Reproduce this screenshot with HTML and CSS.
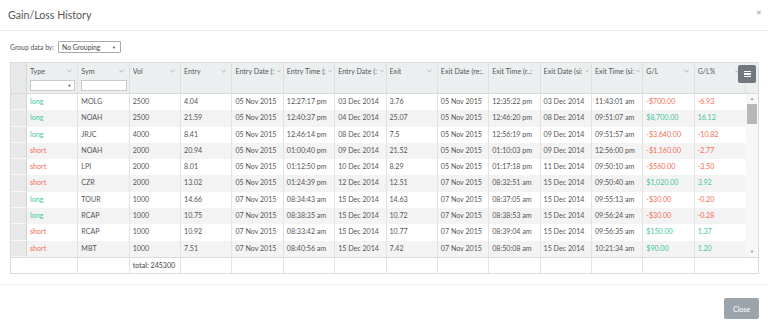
FILE: index.html
```html
<!DOCTYPE html>
<html>
<head>
<meta charset="utf-8">
<link rel="stylesheet" href="styles.css">
</head>
<body>
<div class="modal">
  <div class="modal-header">
    <span class="modal-title">Gain/Loss History</span>
    <span class="close-x">&#x2715;</span>
  </div>
  <div class="modal-body">
    <div class="group-row">
      <span class="group-label">Group data by:</span>
      <span class="group-select">No Grouping<span class="caret">&#9660;</span></span>
    </div>
    <div class="grid">
      <div class="hrow">
        <div class="hcell rh"></div>
        <div class="hcell"><div class="hl"><span class="lbl">Type</span><svg class="chev" viewBox="0 0 6 4"><path d="M0.5 0.8 L3 3.2 L5.5 0.8" /></svg></div><div class="fsel"><span class="caret">&#9660;</span></div></div>
        <div class="hcell"><div class="hl"><span class="lbl">Sym</span><svg class="chev" viewBox="0 0 6 4"><path d="M0.5 0.8 L3 3.2 L5.5 0.8" /></svg></div><div class="finp"></div></div>
        <div class="hcell"><div class="hl"><span class="lbl">Vol</span><svg class="chev" viewBox="0 0 6 4"><path d="M0.5 0.8 L3 3.2 L5.5 0.8" /></svg></div></div>
        <div class="hcell"><div class="hl"><span class="lbl">Entry</span><svg class="chev" viewBox="0 0 6 4"><path d="M0.5 0.8 L3 3.2 L5.5 0.8" /></svg></div></div>
        <div class="hcell"><div class="hl"><span class="lbl trunc">Entry Date (:</span><svg class="chev tiny" viewBox="0 0 6 4"><path d="M0.5 0.8 L3 3.2 L5.5 0.8" /></svg></div></div>
        <div class="hcell"><div class="hl"><span class="lbl trunc">Entry Time (:</span><svg class="chev tiny" viewBox="0 0 6 4"><path d="M0.5 0.8 L3 3.2 L5.5 0.8" /></svg></div></div>
        <div class="hcell"><div class="hl"><span class="lbl trunc">Entry Date (:</span><svg class="chev tiny" viewBox="0 0 6 4"><path d="M0.5 0.8 L3 3.2 L5.5 0.8" /></svg></div></div>
        <div class="hcell"><div class="hl"><span class="lbl">Exit</span><svg class="chev" viewBox="0 0 6 4"><path d="M0.5 0.8 L3 3.2 L5.5 0.8" /></svg></div></div>
        <div class="hcell"><div class="hl"><span class="lbl trunc">Exit Date (re:.</span></div></div>
        <div class="hcell"><div class="hl"><span class="lbl trunc">Exit Time (r..:</span></div></div>
        <div class="hcell"><div class="hl"><span class="lbl trunc">Exit Date (si:</span><svg class="chev tiny" viewBox="0 0 6 4"><path d="M0.5 0.8 L3 3.2 L5.5 0.8" /></svg></div></div>
        <div class="hcell"><div class="hl"><span class="lbl trunc">Exit Time (si:</span><svg class="chev tiny" viewBox="0 0 6 4"><path d="M0.5 0.8 L3 3.2 L5.5 0.8" /></svg></div></div>
        <div class="hcell"><div class="hl"><span class="lbl">G/L</span><svg class="chev" viewBox="0 0 6 4"><path d="M0.5 0.8 L3 3.2 L5.5 0.8" /></svg></div></div>
        <div class="hcell"><div class="hl"><span class="lbl">G/L%</span><svg class="chev" viewBox="0 0 6 4"><path d="M0.5 0.8 L3 3.2 L5.5 0.8" /></svg></div></div>
        <div class="hcell last"></div>
        <div class="menu-btn"><span></span><span></span><span></span></div>
      </div>
      <div class="body">
        <div class="rows">
          <div class="row"><div class="rh"></div><div class="g">long</div><div>MOLG</div><div>2500</div><div>4.04</div><div>05 Nov 2015</div><div>12:27:17 pm</div><div>03 Dec 2014</div><div>3.76</div><div>05 Nov 2015</div><div>12:35:22 pm</div><div>03 Dec 2014</div><div>11:43:01 am</div><div class="r">-$700.00</div><div class="r">-6.93</div></div>
          <div class="row alt"><div class="rh"></div><div class="g">long</div><div>NOAH</div><div>2500</div><div>21.59</div><div>05 Nov 2015</div><div>12:40:37 pm</div><div>04 Dec 2014</div><div>25.07</div><div>05 Nov 2015</div><div>12:46:20 pm</div><div>08 Dec 2014</div><div>09:51:07 am</div><div class="g">$8,700.00</div><div class="g">16.12</div></div>
          <div class="row"><div class="rh"></div><div class="g">long</div><div>JRJC</div><div>4000</div><div>8.41</div><div>05 Nov 2015</div><div>12:46:14 pm</div><div>08 Dec 2014</div><div>7.5</div><div>05 Nov 2015</div><div>12:56:19 pm</div><div>09 Dec 2014</div><div>09:51:57 am</div><div class="r">-$3,640.00</div><div class="r">-10.82</div></div>
          <div class="row alt"><div class="rh"></div><div class="r">short</div><div>NOAH</div><div>2000</div><div>20.94</div><div>05 Nov 2015</div><div>01:00:40 pm</div><div>09 Dec 2014</div><div>21.52</div><div>05 Nov 2015</div><div>01:10:03 pm</div><div>09 Dec 2014</div><div>12:56:00 pm</div><div class="r">-$1,160.00</div><div class="r">-2.77</div></div>
          <div class="row"><div class="rh"></div><div class="r">short</div><div>LPI</div><div>2000</div><div>8.01</div><div>05 Nov 2015</div><div>01:12:50 pm</div><div>10 Dec 2014</div><div>8.29</div><div>05 Nov 2015</div><div>01:17:18 pm</div><div>11 Dec 2014</div><div>09:50:10 am</div><div class="r">-$560.00</div><div class="r">-3.50</div></div>
          <div class="row alt"><div class="rh"></div><div class="r">short</div><div>CZR</div><div>2000</div><div>13.02</div><div>05 Nov 2015</div><div>01:24:39 pm</div><div>12 Dec 2014</div><div>12.51</div><div>07 Nov 2015</div><div>08:32:51 am</div><div>15 Dec 2014</div><div>09:50:40 am</div><div class="g">$1,020.00</div><div class="g">3.92</div></div>
          <div class="row"><div class="rh"></div><div class="g">long</div><div>TOUR</div><div>1000</div><div>14.66</div><div>07 Nov 2015</div><div>08:34:43 am</div><div>15 Dec 2014</div><div>14.63</div><div>07 Nov 2015</div><div>08:37:05 am</div><div>15 Dec 2014</div><div>09:55:13 am</div><div class="r">-$30.00</div><div class="r">-0.20</div></div>
          <div class="row alt"><div class="rh"></div><div class="g">long</div><div>RCAP</div><div>1000</div><div>10.75</div><div>07 Nov 2015</div><div>08:38:35 am</div><div>15 Dec 2014</div><div>10.72</div><div>07 Nov 2015</div><div>08:38:53 am</div><div>15 Dec 2014</div><div>09:56:24 am</div><div class="r">-$30.00</div><div class="r">-0.28</div></div>
          <div class="row"><div class="rh"></div><div class="r">short</div><div>RCAP</div><div>1000</div><div>10.92</div><div>07 Nov 2015</div><div>08:33:42 am</div><div>15 Dec 2014</div><div>10.77</div><div>07 Nov 2015</div><div>08:39:04 am</div><div>15 Dec 2014</div><div>09:56:35 am</div><div class="g">$150.00</div><div class="g">1.37</div></div>
          <div class="row alt"><div class="rh"></div><div class="r">short</div><div>MBT</div><div>1000</div><div>7.51</div><div>07 Nov 2015</div><div>08:40:56 am</div><div>15 Dec 2014</div><div>7.42</div><div>07 Nov 2015</div><div>08:50:08 am</div><div>15 Dec 2014</div><div>10:21:34 am</div><div class="g">$90.00</div><div class="g">1.20</div></div>
        </div>
        <div class="scrollbar">
          <span class="arr">&#9650;</span>
          <div class="thumb"></div>
          <span class="arr down">&#9660;</span>
        </div>
      </div>
      <div class="frow">
        <div class="fc wide"></div><div class="fc"></div><div class="fc total">total: 245300</div><div class="fc"></div><div class="fc"></div><div class="fc"></div><div class="fc"></div><div class="fc"></div><div class="fc"></div><div class="fc"></div><div class="fc"></div><div class="fc"></div><div class="fc"></div><div class="fc wide"></div>
      </div>
    </div>
  </div>
  <div class="modal-footer">
    <button class="btn-close">Close</button>
  </div>
</div>
</body>
</html>
```

FILE: styles.css
```css
* { box-sizing: border-box; }
body {
  margin: 0;
  background: #fff;
  font-family: Lato, "Open Sans", sans-serif;
  color: #555;
}
.modal {
  width: 768px;
  height: 326px;
  display: flex;
  flex-direction: column;
}
.modal-header {
  height: 31px;
  display: flex;
  align-items: center;
  justify-content: space-between;
  padding: 0 6px 1px 8px;
  border-bottom: 1px solid #ececec;
}
.modal-title {
  font-size: 10.6px;
  color: #555;
}
.close-x {
  font-size: 7px;
  color: #9aa0a6;
  margin-top: -5px;
}
.modal-body {
  padding: 10px 9px 10px 10px;
  border-bottom: 1px solid #efefef;
}
.group-row {
  display: flex;
  align-items: center;
  height: 12px;
  font-size: 6.8px;
  color: #555;
}
.group-label { margin-right: 4px; }
.group-select {
  width: 63px;
  height: 12px;
  border: 1px solid #aaa;
  border-radius: 1px;
  display: flex;
  align-items: center;
  justify-content: space-between;
  padding: 0 4px 0 3px;
  color: #444;
}
.caret { font-size: 4px; color: #444; }
.grid {
  margin-top: 9px;
  border: 1px solid #dcdcdc;
  display: flex;
  flex-direction: column;
  font-size: 7.1px;
  color: #555;
}
.hrow {
  position: relative;
  display: grid;
  grid-template-columns: 16px repeat(14, 1fr) 12px;
  height: 31px;
  background: #eceff0;
  border-bottom: 1px solid #d8dadb;
}
.hcell {
  border-right: 1px solid #dde0e1;
  padding: 3px 2px 0 3px;
  overflow: hidden;
}
.hcell.rh { background: #e6e8e9; border-right: 1px solid #d4d6d7; }
.hcell.last { border-right: none; }
.hl {
  display: flex;
  align-items: center;
  justify-content: space-between;
  height: 10px;
  color: #555;
}
.lbl { white-space: nowrap; overflow: hidden; }
.chev {
  width: 5px;
  height: 4px;
  flex: none;
  fill: none;
  stroke: #8a8f93;
  stroke-width: 0.8;
  margin-right: 3px;
}
.chev.tiny { width: 4px; margin-right: 0; margin-left: 1px; }
.fsel, .finp {
  margin-top: 4px;
  height: 11px;
  background: #fff;
  border: 1px solid #c9c9c9;
}
.fsel {
  display: flex;
  align-items: center;
  justify-content: flex-end;
  padding-right: 3px;
}
.menu-btn {
  position: absolute;
  right: 2px;
  top: 2px;
  width: 18px;
  height: 18px;
  background: #70777d;
  border-radius: 2px;
  display: flex;
  flex-direction: column;
  align-items: center;
  justify-content: center;
  gap: 1.3px;
}
.menu-btn span {
  display: block;
  width: 7px;
  height: 1.2px;
  background: #fff;
}
.body {
  display: flex;
  height: 163px;
}
.rows { flex: 1; display: flex; flex-direction: column; }
.row {
  display: grid;
  grid-template-columns: 16px repeat(14, 1fr);
  height: 16.3px;
  background: #fff;
}
.row.alt { background: #f3f3f3; }
.row > div {
  border-right: 1px solid #e3e3e3;
  padding: 0 3px;
  line-height: 16.3px;
  white-space: nowrap;
  overflow: hidden;
}
.row > div:last-child { border-right: none; }
.row > .rh {
  background: #e8e8e8;
  border-bottom: 1px solid #f6f6f6;
  border-right: 1px solid #d4d4d4;
}
.g { color: #3fc49e; }
.r { color: #f26c55; }
.scrollbar {
  width: 12px;
  background: #f7f7f7;
  display: flex;
  flex-direction: column;
  align-items: center;
}
.arr {
  font-size: 4px;
  color: #888;
  line-height: 10px;
}
.arr.down { margin-top: auto; }
.thumb {
  width: 10px;
  height: 20px;
  background: #b5b8bb;
}
.frow {
  display: grid;
  grid-template-columns: 16px repeat(14, 1fr) 12px;
  height: 16px;
  border-top: 1px solid #dcdcdc;
  background: #fff;
}
.fc {
  border-right: 1px solid #e3e3e3;
  padding: 0 3px;
  line-height: 15px;
}
.fc.wide { grid-column: span 2; }
.fc:last-child { border-right: none; }
.fc.total { color: #444; }
.modal-footer {
  flex: 1;
  display: flex;
  justify-content: flex-end;
  align-items: flex-start;
  padding: 13px 9px 0 0;
}
.btn-close {
  width: 35px;
  height: 21px;
  border: none;
  border-radius: 2px;
  background: #9ba4aa;
  color: #fff;
  font-family: Lato, "Open Sans", sans-serif;
  font-size: 7px;
  padding: 0;
}
```
